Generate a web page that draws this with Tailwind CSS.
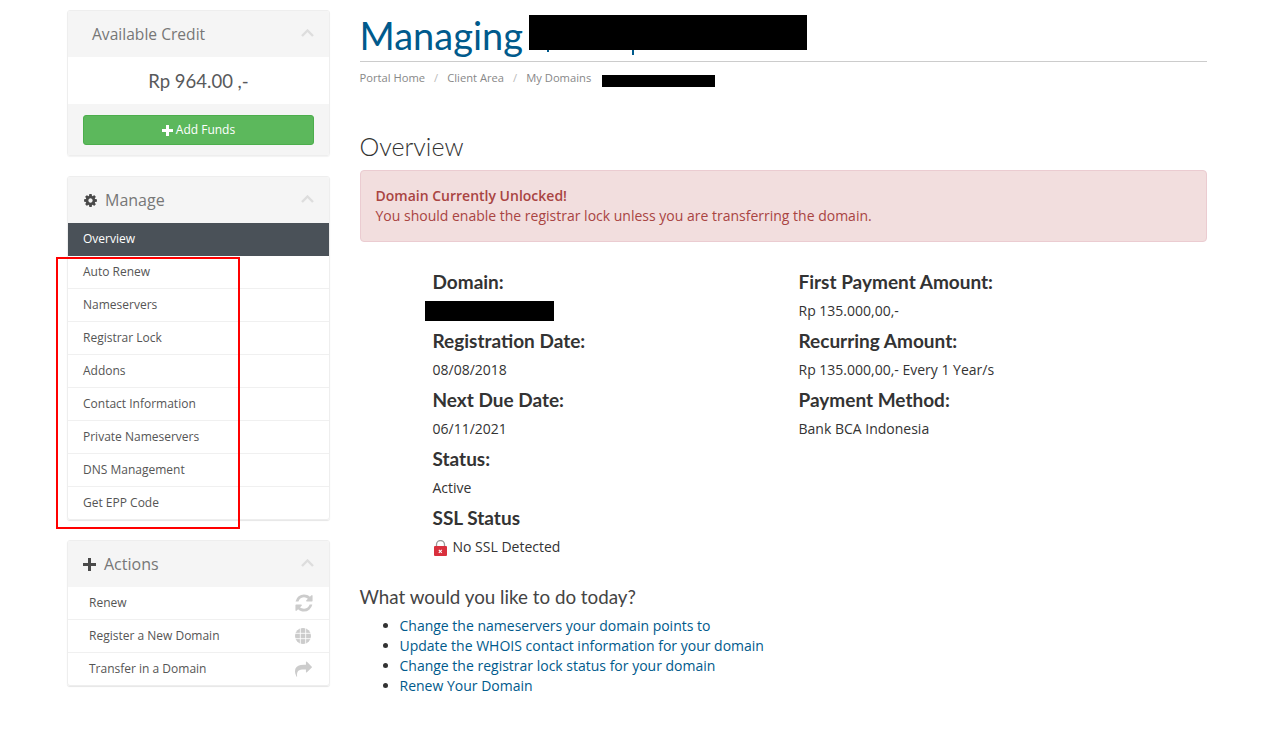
<!DOCTYPE html>
<html lang="en">
<head>
<meta charset="UTF-8">
<title>Managing Domain</title>
<script src="https://cdn.jsdelivr.net/npm/@tailwindcss/browser@4"></script>
</head>
<body class="bg-white text-[#333] text-[14px] leading-5 font-['Open_Sans',sans-serif] overflow-hidden">
<div class="relative w-[1283px] h-[735px] overflow-hidden">
  <div class="flex pl-[67px] pt-[10px]">

    <!-- sidebar -->
    <aside class="w-[263px] shrink-0">
      <div class="border border-[#eee] rounded-[3px] shadow-[0_1px_1px_rgba(0,0,0,0.05)] overflow-hidden">
        <div class="h-[46px] bg-[#f5f5f5] flex items-center justify-between pl-[24px] pr-[15px] text-[15.6px] text-[#777]">
          <span>Available Credit</span>
          <svg class="w-[13px] h-[8px] mb-[3px]" viewBox="0 0 13 8" fill="none" stroke="#ddd" stroke-width="2.4"><path d="M1 7l5.500-5.500L12 7"/></svg>
        </div>
        <div class="h-[47px] flex items-center justify-center text-[18.5px] text-[#58595b] font-['Lato',sans-serif]">Rp 964.00 ,-</div>
        <div class="h-[51px] bg-[#f5f5f5] px-[15px] pt-[11px]">
          <div class="h-[30px] bg-[#5cb85c] border border-[#4cae4c] rounded-[3px] text-white text-[12px] flex items-center justify-center gap-[3px]">
            <svg class="w-[11px] h-[11px]" viewBox="0 0 11 11" fill="#fff"><path d="M4 0h3v4h4v3H7v4H4V7H0V4h4z"/></svg>
            <span>Add Funds</span>
          </div>
        </div>
      </div>

      <div class="mt-[20px] border border-[#eee] rounded-[3px] shadow-[0_1px_1px_rgba(0,0,0,0.1)] overflow-hidden">
        <div class="h-[46px] bg-[#f5f5f5] flex items-center justify-between pl-[15px] pr-[15px] text-[16px] text-[#777]">
          <span class="flex items-center gap-[7px]">
            <svg class="w-[15px] h-[15px]" viewBox="0 0 1792 1792" fill="#4a4a4a"><path d="M1152 896q0-106-75-181t-181-75-181 75-75 181 75 181 181 75 181-75 75-181zm512-109v222q0 12-8 23t-20 13l-185 28q-19 54-39 91 35 50 107 138 10 12 10 25t-9 23q-27 37-99 108t-94 71q-12 0-26-9l-138-108q-44 23-91 38-16 136-29 186-7 28-36 28h-222q-14 0-24.500-8.500t-11.500-21.500l-28-184q-49-16-90-37l-141 107q-10 9-25 9-14 0-25-11-126-114-165-168-7-10-7-23 0-12 8-23 15-21 51-66.500t54-70.500q-27-50-41-99l-183-27q-13-2-21-12.500t-8-23.500v-222q0-12 8-23t19-13l186-28q14-46 39-92-40-57-107-138-10-12-10-24 0-10 9-23 26-36 98.500-107.500t94.500-71.500q13 0 26 10l138 107q44-23 91-38 16-136 29-186 7-28 36-28h222q14 0 24.500 8.500t11.500 21.500l28 184q49 16 90 37l142-107q9-9 24-9 13 0 25 10 129 119 165 170 7 8 7 22 0 12-8 23-15 21-51 66.500t-54 70.500q26 50 41 98l183 28q13 2 21 12.500t8 23.500z"/></svg>
            <span>Manage</span>
          </span>
          <svg class="w-[13px] h-[8px] mb-[3px]" viewBox="0 0 13 8" fill="none" stroke="#ddd" stroke-width="2.4"><path d="M1 7l5.500-5.500L12 7"/></svg>
        </div>
        <div class="text-[12px] text-[#555]">
          <div class="h-[33px] bg-[#4a5158] border-b border-transparent text-white flex items-center pl-[15px]">Overview</div>
          <div class="h-[33px] border-b border-[#f0f0f0] flex items-center pl-[15px]">Auto Renew</div>
          <div class="h-[33px] border-b border-[#f0f0f0] flex items-center pl-[15px]">Nameservers</div>
          <div class="h-[33px] border-b border-[#f0f0f0] flex items-center pl-[15px]">Registrar Lock</div>
          <div class="h-[33px] border-b border-[#f0f0f0] flex items-center pl-[15px]">Addons</div>
          <div class="h-[33px] border-b border-[#f0f0f0] flex items-center pl-[15px]">Contact Information</div>
          <div class="h-[33px] border-b border-[#f0f0f0] flex items-center pl-[15px]">Private Nameservers</div>
          <div class="h-[33px] border-b border-[#f0f0f0] flex items-center pl-[15px]">DNS Management</div>
          <div class="h-[32px] flex items-center pl-[15px]">Get EPP Code</div>
        </div>
      </div>

      <div class="mt-[20px] border border-[#eee] rounded-[3px] shadow-[0_1px_1px_rgba(0,0,0,0.1)] overflow-hidden">
        <div class="h-[46px] bg-[#f5f5f5] flex items-center justify-between pl-[15px] pr-[15px] text-[16px] text-[#777]">
          <span class="flex items-center gap-[8px]">
            <svg class="w-[13px] h-[13px]" viewBox="0 0 13 13" fill="#4a4a4a"><path d="M5 0h3v5h5v3H8v5H5V8H0V5h5z"/></svg>
            <span>Actions</span>
          </span>
          <svg class="w-[13px] h-[8px] mb-[3px]" viewBox="0 0 13 8" fill="none" stroke="#ddd" stroke-width="2.4"><path d="M1 7l5.500-5.500L12 7"/></svg>
        </div>
        <div class="text-[12px] text-[#555]">
          <div class="h-[33px] border-b border-[#f0f0f0] flex items-center justify-between pl-[21px] pr-[15px]">
            <span>Renew</span>
            <svg class="w-[20px] h-[20px]" viewBox="0 0 1792 1792" fill="#ccc"><path d="M1639 1056q0 5-1 7-64 268-268 434.500t-478 166.500q-146 0-282.500-55t-243.500-157l-129 129q-19 19-45 19t-45-19-19-45v-448q0-26 19-45t45-19h448q26 0 45 19t19 45-19 45l-137 137q71 66 161 102t187 36q134 0 250-65t186-179q11-17 53-117 8-23 30-23h192q13 0 22.500 9.500t9.500 22.500zm25-800v448q0 26-19 45t-45 19h-448q-26 0-45-19t-19-45 19-45l138-138q-148-137-349-137-134 0-250 65t-186 179q-11 17-53 117-8 23-30 23h-199q-13 0-22.500-9.500t-9.500-22.500v-7q65-268 270-434.500t480-166.500q146 0 284 55.500t245 156.500l130-129q19-19 45-19t45 19 19 45z"/></svg>
          </div>
          <div class="h-[33px] border-b border-[#f0f0f0] flex items-center justify-between pl-[21px] pr-[18px]">
            <span>Register a New Domain</span>
            <svg class="w-[16px] h-[16px]" viewBox="0 0 15 15"><circle cx="7.500" cy="7.500" r="7.500" fill="#ccc"/><path d="M0 5h15M0 10h15M5 0v15M10 0v15" stroke="#fff" stroke-width="0.8"/></svg>
          </div>
          <div class="h-[32px] flex items-center justify-between pl-[21px] pr-[17px]">
            <span>Transfer in a Domain</span>
            <svg class="w-[17px] h-[17px]" viewBox="0 0 1792 1792" fill="#ccc"><path d="M1792 640q0 26-19 45l-512 512q-19 19-45 19t-45-19-19-45v-256h-224q-98 0-175.500 6t-154 21.500-133 42.500-105.500 69.500-80 101-48.500 138.500-17.500 181q0 55 5 123 0 6 2.500 23.500t2.500 26.500q0 15-8.500 25t-23.500 10q-16 0-28-17-7-9-13-22t-13.500-30-10.500-24q-127-285-127-451 0-199 53-333 162-403 875-403h224v-256q0-26 19-45t45-19 45 19l512 512q19 19 19 45z"/></svg>
          </div>
        </div>
      </div>
    </aside>

    <!-- main -->
    <main class="w-[847.5px] ml-[29.5px]">
      <div class="h-[52px] border-b border-[#ccc] font-['Lato',sans-serif] text-[38px] leading-[50px] text-[#005a8c]">Managing</div>
      <div class="mt-[7px] h-[17px] flex items-center text-[11.2px] text-[#888]">
        <span>Portal Home</span><span class="text-[#bbb] mx-[9px]">/</span>
        <span>Client Area</span><span class="text-[#bbb] mx-[9px]">/</span>
        <span>My Domains</span>
      </div>
      <h2 class="mt-[42px] h-[36px] font-['Lato',sans-serif] font-light text-[25px] leading-[36px] text-[#333]">Overview</h2>
      <div class="mt-[6px] h-[72px] bg-[#f2dede] border border-[#ebccd1] rounded-[4px] px-[15px] pt-[15px] text-[#a94442]">
        <div class="font-semibold">Domain Currently Unlocked!</div>
        <div>You should enable the registrar lock unless you are transferring the domain.</div>
      </div>

      <div class="mt-[24px] grid grid-cols-[366px_1fr] pl-[73px]">
        <div>
          <div class="h-[30px] font-['Lato',sans-serif] font-bold text-[19px] leading-[32px]">Domain:</div>
          <div class="h-[29px] leading-[29px]"></div>
          <div class="h-[30px] font-['Lato',sans-serif] font-bold text-[19px] leading-[32px]">Registration Date:</div>
          <div class="h-[29px] leading-[29px]">08/08/2018</div>
          <div class="h-[30px] font-['Lato',sans-serif] font-bold text-[19px] leading-[32px]">Next Due Date:</div>
          <div class="h-[29px] leading-[29px]">06/11/2021</div>
          <div class="h-[30px] font-['Lato',sans-serif] font-bold text-[19px] leading-[32px]">Status:</div>
          <div class="h-[29px] leading-[29px]">Active</div>
          <div class="h-[30px] font-['Lato',sans-serif] font-bold text-[19px] leading-[32px]">SSL Status</div>
          <div class="h-[29px] flex items-center gap-[5px]">
            <svg class="w-[15px] h-[16px] mt-[2px]" viewBox="0 0 15 16"><path d="M3.500 7V4.500a4 4 0 0 1 8 0V7" fill="none" stroke="#9a9a9a" stroke-width="1.300"/><rect x="1" y="6" width="13" height="10" rx="1" fill="#d9303d"/><path d="M5.800 9.800l3 3M8.800 9.800l-3 3" stroke="#fff" stroke-width="1.100"/></svg>
            <span>No SSL Detected</span>
          </div>
        </div>
        <div>
          <div class="h-[30px] font-['Lato',sans-serif] font-bold text-[19px] leading-[32px]">First Payment Amount:</div>
          <div class="h-[29px] leading-[29px]">Rp 135.000,00,-</div>
          <div class="h-[30px] font-['Lato',sans-serif] font-bold text-[19px] leading-[32px]">Recurring Amount:</div>
          <div class="h-[29px] leading-[29px]">Rp 135.000,00,- Every 1 Year/s</div>
          <div class="h-[30px] font-['Lato',sans-serif] font-bold text-[19px] leading-[32px]">Payment Method:</div>
          <div class="h-[29px] leading-[29px]">Bank BCA Indonesia</div>
        </div>
      </div>

      <h3 class="mt-[22px] h-[28px] font-['Lato',sans-serif] text-[18.8px] leading-[28px] text-[#444]">What would you like to do today?</h3>
      <ul class="mt-[5px] list-disc pl-[40px] text-[#005a8c] marker:text-[#333]">
        <li>Change the nameservers your domain points to</li>
        <li>Update the WHOIS contact information for your domain</li>
        <li>Change the registrar lock status for your domain</li>
        <li>Renew Your Domain</li>
      </ul>
    </main>
  </div>

  <!-- redactions and annotation lying over the page -->
  <div class="absolute left-[547px] top-[50px] w-[2px] h-[2px] bg-[#005a8c]"></div>
  <div class="absolute left-[632px] top-[50px] w-[2px] h-[5px] bg-[#005a8c]"></div>
  <div class="absolute left-[529px] top-[15px] w-[278px] h-[35px] bg-black"></div>
  <div class="absolute left-[602px] top-[75px] w-[113px] h-[12px] bg-black"></div>
  <div class="absolute left-[425px] top-[301px] w-[129px] h-[20px] bg-black"></div>
  <div class="absolute left-[56px] top-[257px] w-[184px] h-[272px] border-2 border-[#f00]"></div>
</div>
</body>
</html>
